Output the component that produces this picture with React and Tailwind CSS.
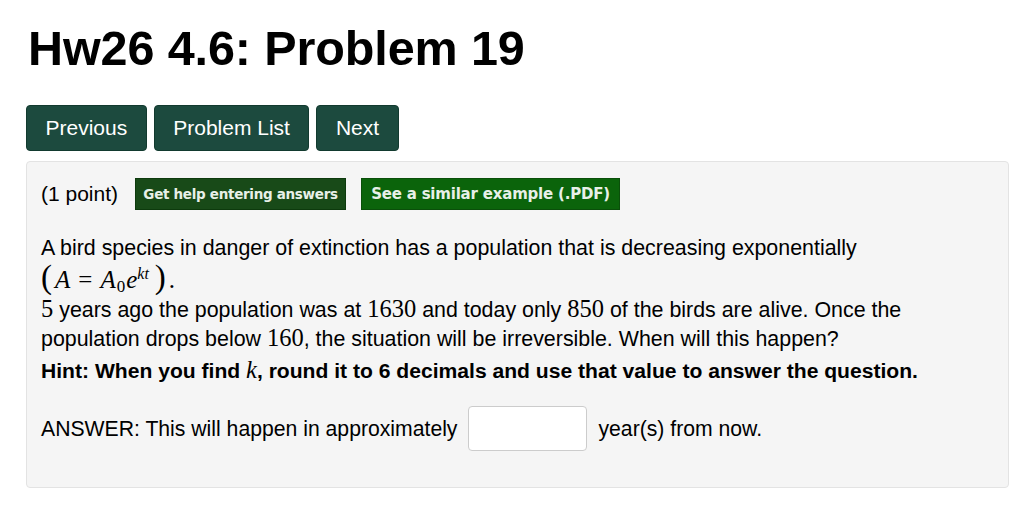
export default function App() {
  const serif = "font-['Liberation_Serif',serif] text-[24.5px] leading-[20px]";
  return (
    <div className="min-h-screen bg-white text-black font-['Liberation_Sans',Arial,sans-serif]">
      <div className="pl-[26px] pr-4 pt-[21px]">
        <h1 className="pl-[2px] text-[48.5px] font-bold leading-[54px] tracking-[-0.1px]">Hw26 4.6: Problem 19</h1>

        <div className="mt-[30px] flex gap-[7px]">
          <button className="h-[46px] rounded-[4px] border border-[#123a2f] bg-[#1c4a3e] px-[18.5px] text-[21px] text-white">Previous</button>
          <button className="h-[46px] rounded-[4px] border border-[#123a2f] bg-[#1c4a3e] px-[18.5px] text-[21px] text-white">Problem List</button>
          <button className="h-[46px] rounded-[4px] border border-[#123a2f] bg-[#1c4a3e] px-[18.5px] text-[21px] text-white">Next</button>
        </div>

        <div className="mt-[10px] w-[983px] h-[327px] rounded-[4px] border border-[#e3e3e3] bg-[#f5f5f5] px-[14px] pt-[16px]">
          <div className="flex items-center">
            <span className="text-[21px]">(1 point)</span>
            <span className="ml-[17px] flex h-[32px] w-[211px] items-center justify-center border border-[#0d3a0d] bg-[#184a18] text-[13.5px] font-bold text-[#e8f0e8] font-['DejaVu_Sans',sans-serif] tracking-[-0.3px]">Get help entering answers</span>
            <span className="ml-[15px] flex h-[32px] w-[259px] items-center justify-center border border-[#0a4f0a] bg-[#0b640b] text-[15px] font-bold text-[#e8f0e8] font-['DejaVu_Sans',sans-serif] tracking-[-0.2px]">See a similar example (.PDF)</span>
          </div>

          <div className="mt-[24px] text-[21.4px]">
            <div className="leading-[28px]">A bird species in danger of extinction has a population that is decreasing exponentially</div>
            <div className="flex h-[30px] items-baseline font-['Liberation_Serif',serif] text-[25px] leading-[30px]">
              <span className="text-[33px] font-light">(</span>
              <i className="ml-[3px]">A</i>
              <span className="mx-[8px]">=</span>
              <i>A</i>
              <span className="ml-[1px] translate-y-[4px] text-[17px]">0</span>
              <i className="ml-[1px]">e</i>
              <i className="-translate-y-[9px] text-[16px]">kt</i>
              <span className="ml-[6px] text-[33px] font-light">)</span>
              <span className="ml-[3px]">.</span>
            </div>
            <div className="mt-[3px] leading-[30px]">
              <span className={serif}>5</span> years ago the population was at{' '}
              <span className={serif}>1630</span> and today only{' '}
              <span className={serif}>850</span> of the birds are alive. Once the
            </div>
            <div className="leading-[29px]">
              population drops below <span className={serif}>160</span>, the situation will be irreversible. When will this happen?
            </div>
            <div className="text-[21.1px] font-bold leading-[34px]">
              Hint: When you find <i className={serif + " font-normal"}>k</i>, round it to 6 decimals and use that value to answer the question.
            </div>
          </div>

          <div className="mt-[18px] flex items-center text-[21.2px]">
            <span>ANSWER: This will happen in approximately</span>
            <input className="ml-[11px] h-[45px] w-[119px] rounded-[4px] border border-[#cccccc] bg-white" />
            <span className="ml-[11px]">year(s) from now.</span>
          </div>
        </div>
      </div>
    </div>
  );
}
